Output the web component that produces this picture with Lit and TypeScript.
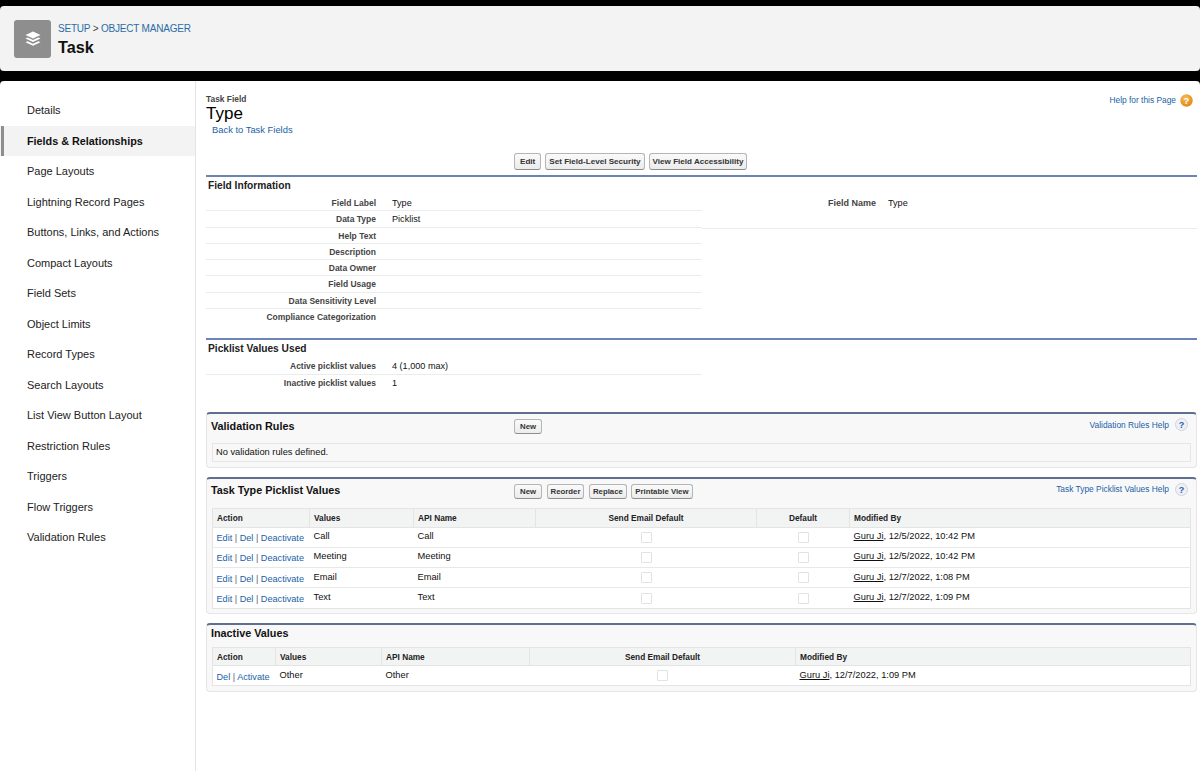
import { LitElement, html, css } from 'lit';
import { customElement } from 'lit/decorators.js';

const NAV = [
  'Details',
  'Fields & Relationships',
  'Page Layouts',
  'Lightning Record Pages',
  'Buttons, Links, and Actions',
  'Compact Layouts',
  'Field Sets',
  'Object Limits',
  'Record Types',
  'Search Layouts',
  'List View Button Layout',
  'Restriction Rules',
  'Triggers',
  'Flow Triggers',
  'Validation Rules',
];

const FIELD_ROWS = [
  ['Field Label', 'Type'],
  ['Data Type', 'Picklist'],
  ['Help Text', ''],
  ['Description', ''],
  ['Data Owner', ''],
  ['Field Usage', ''],
  ['Data Sensitivity Level', ''],
  ['Compliance Categorization', ''],
];

const PICKLIST_ROWS = [
  ['Active picklist values', '4 (1,000 max)'],
  ['Inactive picklist values', '1'],
];

const ACTIVE_VALUES = [
  ['Call', '12/5/2022, 10:42 PM'],
  ['Meeting', '12/5/2022, 10:42 PM'],
  ['Email', '12/7/2022, 1:08 PM'],
  ['Text', '12/7/2022, 1:09 PM'],
];

@customElement('app-root')
export class AppRoot extends LitElement {
  static styles = css`
    :host {
      display: block;
      height: 771px;
      overflow: hidden;
      background: #000;
      font-family: 'Liberation Sans', Arial, sans-serif;
      color: #111;
      padding-top: 6px;
      box-sizing: border-box;
    }

    a {
      color: #1b5fa8;
      text-decoration: none;
    }

    .top {
      height: 65px;
      background: #f3f3f3;
      border-radius: 4px;
      display: flex;
      align-items: center;
      gap: 7px;
      padding-left: 14px;
      box-sizing: border-box;
    }
    .top-icon {
      width: 37px;
      height: 38px;
      background: #8e8e8e;
      border-radius: 3px;
      display: flex;
      align-items: center;
      justify-content: center;
    }
    .crumbs {
      font-size: 10px;
      letter-spacing: -0.2px;
      line-height: 12px;
      color: #444;
      margin-top: 2px;
    }
    .crumbs a {
      color: #2a6ca5;
    }
    .top-title {
      font-size: 16.2px;
      font-weight: 700;
      line-height: 20px;
      margin-top: 2px;
      color: #111;
    }

    .main {
      margin-top: 10px;
      height: 690px;
      background: #fff;
      border-radius: 4px 4px 0 0;
      display: flex;
    }

    .side {
      width: 196px;
      flex: none;
      box-sizing: border-box;
      border-right: 1px solid #e4e4e4;
      padding-top: 14px;
    }
    .nav-item {
      height: 30.5px;
      line-height: 30.5px;
      padding-left: 27px;
      font-size: 11px;
      color: #222;
      white-space: nowrap;
    }
    .nav-item.active {
      background: #f3f3f3;
      font-size: 10.8px;
      font-weight: 700;
      color: #111;
      position: relative;
    }
    .nav-item.active::before {
      content: '';
      position: absolute;
      left: 1px;
      top: 0;
      bottom: 0;
      width: 3px;
      background: #8e8e8e;
    }

    .content {
      flex: 1;
      padding: 0 3px 0 10px;
      min-width: 0;
    }

    .page-head {
      height: 64px;
      display: flex;
      justify-content: space-between;
      padding-top: 14px;
      box-sizing: border-box;
    }
    .eyebrow {
      font-size: 8.4px;
      font-weight: 700;
      line-height: 9px;
      color: #444;
    }
    .page-title {
      font-size: 17px;
      line-height: 19px;
      color: #000;
    }
    .back {
      display: block;
      margin: 1px 0 0 6px;
      font-size: 9.4px;
      line-height: 12px;
    }
    .page-help {
      display: flex;
      align-items: center;
      gap: 4px;
      font-size: 8.4px;
      height: 14px;
      margin: -2px 4px 0 0;
    }

    .btn {
      display: inline-block;
      box-sizing: border-box;
      height: 17px;
      line-height: 15px;
      padding: 0 3px;
      font-size: 8.1px;
      font-weight: 700;
      color: #333;
      background: linear-gradient(#fafafa, #ececec);
      border: 1px solid #b5b5b5;
      border-bottom-color: #8f8f8f;
      border-radius: 3px;
      white-space: nowrap;
    }
    .btn.wide {
      padding: 0 5px;
    }
    .btn-row {
      display: flex;
      gap: 4px;
      height: 17px;
      padding-left: 308px;
      margin-top: 8px;
    }

    .section-title {
      border-top: 2px solid #6b84b5;
      margin-top: 5px;
      height: 15px;
      padding: 2px 0 0 2px;
      font-size: 10.2px;
      line-height: 13px;
      font-weight: 700;
      color: #222;
      box-sizing: content-box;
    }
    .detail {
      display: grid;
      grid-template-columns: 496px 1fr;
    }
    .pair {
      display: grid;
      grid-template-columns: 170px 1fr;
      column-gap: 16px;
      height: 16.3px;
      line-height: 16px;
      border-bottom: 1px solid #ececec;
      box-sizing: border-box;
    }
    .pair:last-child {
      border-bottom: none;
    }
    .pair b {
      text-align: right;
      font-size: 8.5px;
      color: #444;
    }
    .pair span {
      color: #111;
      font-size: 9.1px;
    }
    .pairs.right {
      border-bottom: 1px solid #ececec;
      height: 33px;
    }
    .pairs.right .pair {
      grid-template-columns: 174px 1fr;
      column-gap: 12px;
      border-bottom: none;
    }
    .pairs.right b {
      font-size: 9px;
    }
    .detail.fields {
      height: 138px;
      padding-top: 1px;
    }
    .detail.picklist {
      height: 54px;
      padding-top: 1px;
    }
    .detail.picklist .pair {
      height: 17px;
    }

    .panel {
      background: #f8f8f8;
      border: 1px solid #e6e6e6;
      border-top: 2px solid #5f6f8f;
      border-radius: 4px;
      box-sizing: border-box;
      padding: 0 5px 5px;
      margin-bottom: 9px;
    }
    .panel.tight {
      padding-bottom: 4px;
    }
    .panel-head {
      display: grid;
      grid-template-columns: 302px 1fr auto;
      align-items: center;
      height: 29px;
      padding-bottom: 6px;
      box-sizing: border-box;
    }
    .panel-head.short {
      height: 22.5px;
      padding-bottom: 5px;
    }
    .panel-title {
      font-size: 10.8px;
      font-weight: 700;
      color: #111;
      margin-left: -1px;
    }
    .btns {
      display: flex;
      gap: 4.5px;
      margin-top: 2px;
    }
    .panel-head .btn {
      height: 15px;
      line-height: 13px;
      font-size: 7.8px;
    }
    .panel-help {
      display: flex;
      align-items: center;
      gap: 6px;
      font-size: 8.4px;
      margin-right: 3px;
      margin-top: -2px;
    }
    .none {
      background: #f8f8f8;
      border: 1px solid #e6e6e6;
      padding: 0 3px;
      font-size: 9.3px;
      height: 18.5px;
      line-height: 17px;
      box-sizing: border-box;
    }

    table {
      width: 100%;
      border-collapse: collapse;
      table-layout: fixed;
      background: #fff;
      border: 1px solid #e4e4e4;
      font-size: 9.3px;
    }
    th {
      height: 18px;
      padding: 0 4px;
      background: #f2f3f3;
      border-right: 1px solid #e4e4e4;
      border-bottom: 1px solid #e4e4e4;
      font-size: 8.3px;
      font-weight: 700;
      text-align: left;
      color: #222;
    }
    table.inactive th {
      height: 17px;
    }
    th:last-child {
      border-right: none;
    }
    th.mid {
      text-align: center;
    }
    td {
      height: 20.3px;
      padding: 0 4px;
      border-bottom: 1px solid #e8e8e8;
      color: #111;
      white-space: nowrap;
      box-sizing: border-box;
    }
    tr:last-child td {
      border-bottom: none;
    }
    td.action {
      padding: 2px 0 0 3.5px;
      font-size: 9.15px;
      color: #666;
    }
    td.text {
      padding-bottom: 2px;
    }
    td.mid {
      text-align: center;
    }
    .check {
      display: inline-block;
      width: 9px;
      height: 9px;
      background: #fff;
      border: 1px solid #e2e2e2;
      border-radius: 1px;
      vertical-align: middle;
    }
    .user {
      color: #111;
      text-decoration: underline;
    }
  `;

  private renderPairs(rows: string[][]) {
    return html`
      <div class="pairs">
        ${rows.map(([label, value]) => html`<div class="pair"><b>${label}</b><span>${value}</span></div>`)}
      </div>
    `;
  }

  private renderPanelHelp(label: string) {
    return html`
      <a class="panel-help" href="#">
        ${label}
        <svg width="13" height="13" viewBox="0 0 13 13">
          <circle cx="6.5" cy="6.5" r="6" fill="#eef0f4" stroke="#cfd4dc" />
          <text x="6.5" y="10" text-anchor="middle" font-size="9" font-weight="700" fill="#2a62b0">?</text>
        </svg>
      </a>
    `;
  }

  private renderActiveTable() {
    return html`
      <table>
        <colgroup>
          <col style="width:97px" />
          <col style="width:104px" />
          <col style="width:122px" />
          <col style="width:221px" />
          <col style="width:93px" />
          <col />
        </colgroup>
        <tr>
          <th>Action</th>
          <th>Values</th>
          <th>API Name</th>
          <th class="mid">Send Email Default</th>
          <th class="mid">Default</th>
          <th>Modified By</th>
        </tr>
        ${ACTIVE_VALUES.map(
          ([name, date]) => html`
            <tr>
              <td class="action"><a href="#">Edit</a> | <a href="#">Del</a> | <a href="#">Deactivate</a></td>
              <td class="text">${name}</td>
              <td class="text">${name}</td>
              <td class="mid"><span class="check"></span></td>
              <td class="mid"><span class="check"></span></td>
              <td class="text"><a class="user" href="#">Guru Ji</a>, ${date}</td>
            </tr>
          `,
        )}
      </table>
    `;
  }

  private renderInactiveTable() {
    return html`
      <table class="inactive">
        <colgroup>
          <col style="width:63px" />
          <col style="width:106px" />
          <col style="width:148px" />
          <col style="width:266px" />
          <col />
        </colgroup>
        <tr>
          <th>Action</th>
          <th>Values</th>
          <th>API Name</th>
          <th class="mid">Send Email Default</th>
          <th>Modified By</th>
        </tr>
        <tr>
          <td class="action"><a href="#">Del</a> | <a href="#">Activate</a></td>
          <td class="text">Other</td>
          <td class="text">Other</td>
          <td class="mid"><span class="check"></span></td>
          <td class="text"><a class="user" href="#">Guru Ji</a>, 12/7/2022, 1:09 PM</td>
        </tr>
      </table>
    `;
  }

  render() {
    return html`
      <header class="top">
        <div class="top-icon">
          <svg width="18" height="18" viewBox="0 0 18 18" fill="#fff">
            <path d="M9 1.5 16.5 5 9 8.5 1.5 5z" />
            <path d="M3.6 7.6 9 10.1l5.4-2.5 2.1 1L9 12.1 1.5 8.6z" />
            <path d="M3.6 11.2 9 13.7l5.4-2.5 2.1 1L9 15.7 1.5 12.2z" />
          </svg>
        </div>
        <div>
          <div class="crumbs"><a href="#">SETUP</a> &gt; <a href="#">OBJECT MANAGER</a></div>
          <div class="top-title">Task</div>
        </div>
      </header>
      <div class="main">
        <nav class="side">
          ${NAV.map(
            (item) => html`<div class="nav-item ${item === 'Fields & Relationships' ? 'active' : ''}">${item}</div>`,
          )}
        </nav>
        <div class="content">
          <div class="page-head">
            <div>
              <div class="eyebrow">Task Field</div>
              <div class="page-title">Type</div>
              <a class="back" href="#">Back to Task Fields</a>
            </div>
            <a class="page-help" href="#">
              Help for this Page
              <svg width="13" height="13" viewBox="0 0 13 13">
                <defs>
                  <radialGradient id="orange" cx="0.4" cy="0.3" r="0.8">
                    <stop offset="0" stop-color="#f7b955" />
                    <stop offset="1" stop-color="#dd8410" />
                  </radialGradient>
                </defs>
                <circle cx="6.5" cy="6.5" r="6.2" fill="url(#orange)" />
                <text x="6.5" y="10" text-anchor="middle" font-size="9.5" font-weight="700" fill="#fff">?</text>
              </svg>
            </a>
          </div>
          <div class="btn-row">
            <span class="btn wide">Edit</span>
            <span class="btn">Set Field-Level Security</span>
            <span class="btn">View Field Accessibility</span>
          </div>
          <div class="section-title">Field Information</div>
          <div class="detail fields">
            ${this.renderPairs(FIELD_ROWS)}
            <div class="pairs right">
              <div class="pair"><b>Field Name</b><span>Type</span></div>
            </div>
          </div>
          <div class="section-title">Picklist Values Used</div>
          <div class="detail picklist">${this.renderPairs(PICKLIST_ROWS)}</div>
          <section class="panel">
            <div class="panel-head">
              <div class="panel-title">Validation Rules</div>
              <div class="btns"><span class="btn wide">New</span></div>
              ${this.renderPanelHelp('Validation Rules Help')}
            </div>
            <div class="none">No validation rules defined.</div>
          </section>
          <section class="panel tight">
            <div class="panel-head">
              <div class="panel-title">Task Type Picklist Values</div>
              <div class="btns">
                <span class="btn wide">New</span>
                <span class="btn">Reorder</span>
                <span class="btn">Replace</span>
                <span class="btn">Printable View</span>
              </div>
              ${this.renderPanelHelp('Task Type Picklist Values Help')}
            </div>
            ${this.renderActiveTable()}
          </section>
          <section class="panel">
            <div class="panel-head short">
              <div class="panel-title">Inactive Values</div>
            </div>
            ${this.renderInactiveTable()}
          </section>
        </div>
      </div>
    `;
  }
}
